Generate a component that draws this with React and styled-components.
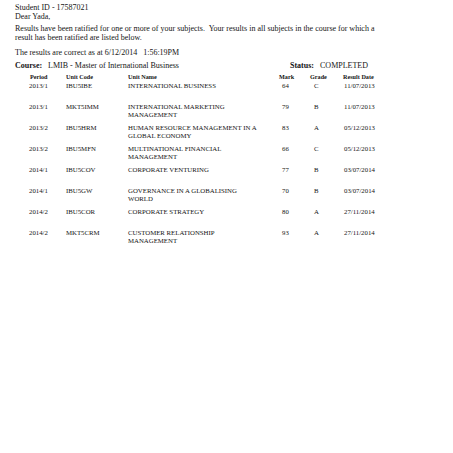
import React from 'react';
import styled, { createGlobalStyle } from 'styled-components';

const GlobalStyle = createGlobalStyle`
	html, body {
		margin: 0;
		padding: 0;
		background: #fff;
	}
	body {
		font-family: "Liberation Serif", "Times New Roman", serif;
		color: #151515;
	}
`;

const Page = styled.div`
	width: 453px;
	height: 453px;
	padding: 3px 0 0 15px;
	box-sizing: border-box;
	font-size: 8px;
	line-height: 9px;
`;

const Line = styled.div`
	margin-top: ${p => p.$gap || 0}px;
`;

const Para = styled.div`
	margin-top: ${p => p.$gap || 0}px;
	width: 368px;
`;

const CourseBar = styled.div`
	display: flex;
	margin-top: 4px;
`;

const CourseLeft = styled.div`
	width: 275px;
`;

const CourseRight = styled.div`
	flex: 1;
`;

const Label = styled.b`
	margin-right: 4px;
`;

const Table = styled.div`
	display: grid;
	grid-template-columns: 37px 62px 151px 31px 33px 70px;
	margin-top: 3px;
	margin-left: 14px;
	font-size: 6.8px;
	line-height: 8px;
`;

const Head = styled.div`
	font-weight: bold;
	font-size: 6.2px;
	padding-left: ${p => p.$indent || 0}px;
	height: 8px;
`;

const Cell = styled.div`
	padding-left: ${p => p.$indent || 0}px;
	padding-right: ${p => p.$pr || 0}px;
	height: 21px;
	padding-top: 1px;
	box-sizing: border-box;
`;

const rows = [
	['2013/1', 'IBU5IBE', 'INTERNATIONAL BUSINESS', '64', 'C', '11/07/2013'],
	['2013/1', 'MKT5IMM', 'INTERNATIONAL MARKETING MANAGEMENT', '79', 'B', '11/07/2013'],
	['2013/2', 'IBU5HRM', 'HUMAN RESOURCE MANAGEMENT IN A GLOBAL ECONOMY', '83', 'A', '05/12/2013'],
	['2013/2', 'IBU5MFN', 'MULTINATIONAL FINANCIAL MANAGEMENT', '66', 'C', '05/12/2013'],
	['2014/1', 'IBU5COV', 'CORPORATE VENTURING', '77', 'B', '03/07/2014'],
	['2014/1', 'IBU5GW', 'GOVERNANCE IN A GLOBALISING WORLD', '70', 'B', '03/07/2014'],
	['2014/2', 'IBU5COR', 'CORPORATE STRATEGY', '80', 'A', '27/11/2014'],
	['2014/2', 'MKT5CRM', 'CUSTOMER RELATIONSHIP MANAGEMENT', '93', 'A', '27/11/2014'],
];

const indents = [0, 0, 0, 3, 4, 1];

export default function App() {
	return (
		<>
			<GlobalStyle />
			<Page>
				<Line>Student ID - 17587021</Line>
				<Line>Dear Yada,</Line>
				<Para $gap={3}>
					Results have been ratified for one or more of your subjects.&nbsp; Your results in all subjects in the course for which a result has been ratified are listed below.
				</Para>
				<Line $gap={6}>The results are correct as at 6/12/2014 &nbsp; 1:56:19PM</Line>
				<CourseBar>
					<CourseLeft><Label>Course:</Label> LMIB - Master of International Business</CourseLeft>
					<CourseRight><Label>Status:</Label> COMPLETED</CourseRight>
				</CourseBar>
				<Table>
					<Head $indent={1}>Period</Head>
					<Head>Unit Code</Head>
					<Head>Unit Name</Head>
					<Head>Mark</Head>
					<Head>Grade</Head>
					<Head>Result Date</Head>
					{rows.map(r => r.map((v, i) => (
						<Cell key={r[1] + i} $indent={indents[i]} $pr={i === 2 ? 19 : 0}>{v}</Cell>
					)))}
				</Table>
			</Page>
		</>
	);
}
